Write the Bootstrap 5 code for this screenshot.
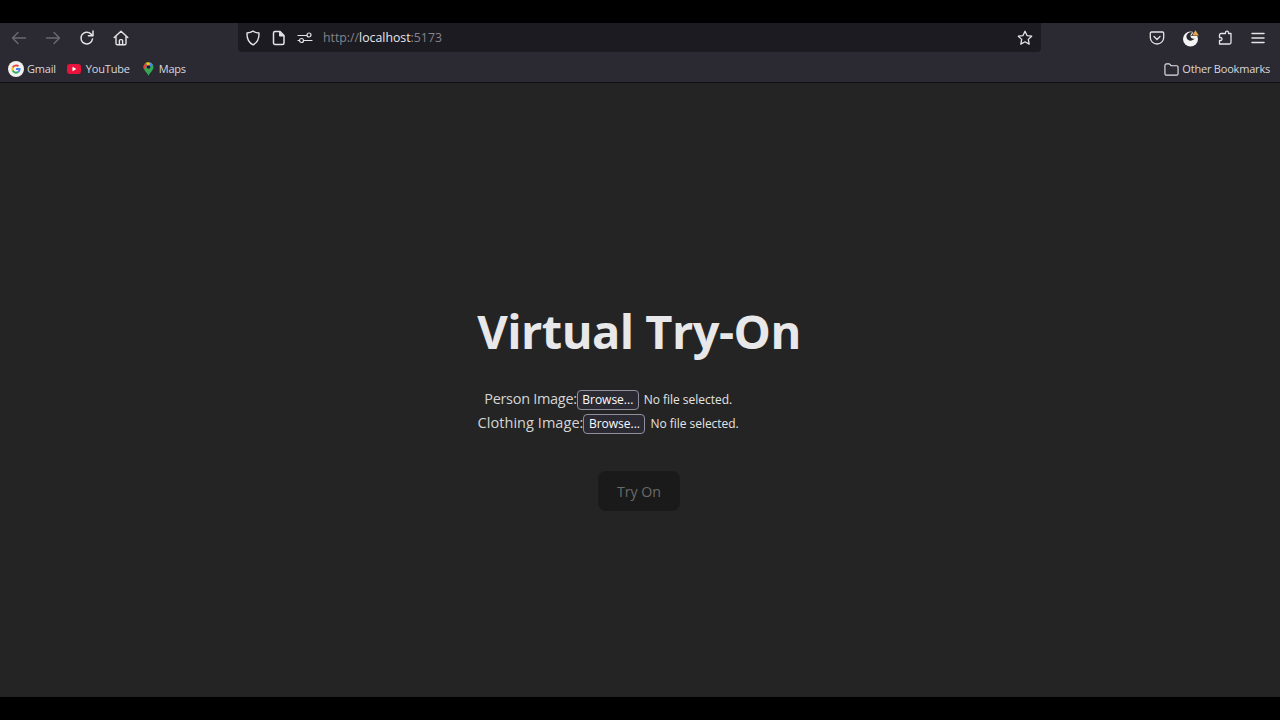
<!DOCTYPE html>
<html lang="en">
<head>
  <meta charset="UTF-8" />
  <meta name="viewport" content="width=device-width, initial-scale=1.0"/>
  <title>Virtual Try-On</title>
  <link href="https://cdn.jsdelivr.net/npm/bootstrap@5.3.0/dist/css/bootstrap.min.css" rel="stylesheet" />
  <style>
    body {
      font-family: "Open Sans", "Noto Sans", sans-serif;
      background: #000;
      height: 720px;
      overflow: hidden;
      padding: 23px 0;
    }
    .frame { height: 674px; }
    .browser-bar { background: #2b2a33; height: 60px; border-bottom: 1px solid #111114; flex: none; }
    .tool-row { height: 29px; }
    .tool-btn { width: 16px; height: 16px; color: #e4e4e7; flex: none; }
    .tool-btn.off { color: #6b6a72; }
    .nav-tools { width: 238px; padding-left: 11px; gap: 18px; }
    .url-box {
      width: 803px;
      height: 29px;
      background: #1c1b22;
      border-radius: 0 0 4px 4px;
      padding: 0 8px 0 7px;
      font-size: 12.3px;
      color: #85848b;
    }
    .url-box b { font-weight: 400; color: #e8e8ea; }
    .url-text { padding-top: 2px; }
    .url-icon { margin-right: 10px; }
    .right-tools { flex: 1; padding-right: 14px; gap: 17px; }
    .avatar-icon { width: 18px; height: 18px; }
    .bookmark-row { height: 30px; padding: 4px 10px 0 8px; font-size: 11px; letter-spacing: -.2px; color: #d8d8dc; }
    .bookmark-link { display: flex; align-items: center; gap: 3px; margin-right: 11px; }
    .yt-link { gap: 5px; margin-right: 13px; }
    .maps-link { gap: 5px; }
    .other-link { margin-right: 0; margin-left: auto; }
    .page-area { background: #242424; flex: 1; padding: 34px 2px 0 0; }
    .app-title { font-size: 47px; font-weight: 700; line-height: 54px; color: #e8e8ea; margin: 0 0 29px; letter-spacing: -.55px; }
    .file-row { height: 24px; font-size: 14.5px; color: #d4d4d4; letter-spacing: -.1px; }
    .person-label { letter-spacing: -.3px; }
    .cloth-label { letter-spacing: .05px; }
    .file-input { width: 217px; margin-top: 2px; font-size: 12px; color: #e4e4e4; letter-spacing: -.03px; text-align: left; }
    .browse-btn {
      background: #2b2a33;
      border: 1px solid #8f8f9d;
      border-radius: 4px;
      color: #fbfbfe;
      height: 20px;
      width: 62px;
      padding: 0;
      font-size: 12px;
      line-height: 18px;
      margin-right: 5px;
    }
    .try-btn {
      border: 0;
      border-radius: 8px;
      width: 82px;
      height: 40px;
      padding: 2px 0 0;
      font-size: 14.2px;
      margin-top: 36px;
    }
    .try-btn:disabled { background: #1a1a1a; color: #6a6a6a; opacity: 1; }
  </style>
</head>
<body>
  <div class="frame d-flex flex-column">
    <div class="browser-bar">
      <div class="tool-row d-flex align-items-center">
        <div class="nav-tools d-flex align-items-center">
          <svg class="tool-btn off" viewBox="0 0 16 16" fill="none" stroke="currentColor" stroke-width="1.4" stroke-linecap="round" stroke-linejoin="round"><path d="M14.5 8H1.5M7 2.500 1.500 8 7 13.500"/></svg>
          <svg class="tool-btn off" viewBox="0 0 16 16" fill="none" stroke="currentColor" stroke-width="1.4" stroke-linecap="round" stroke-linejoin="round"><path d="M1.500 8h13M9 2.500 14.500 8 9 13.500"/></svg>
          <svg class="tool-btn" viewBox="0 0 16 16" fill="none" stroke="currentColor" stroke-width="1.5" stroke-linecap="round" stroke-linejoin="round"><path d="M13.500 9a5.800 5.800 0 1 1-1.700-5.100l1.700 1.600"/><path d="M14 1v4.700H9.400"/></svg>
          <svg class="tool-btn" viewBox="0 0 16 16" fill="none" stroke="currentColor" stroke-width="1.4" stroke-linejoin="round" stroke-linecap="round"><path d="M1.200 7.600 8 1.300l6.800 6.300M3 6.200v7.200c0 .8.500 1.300 1.300 1.300h7.400c.8 0 1.300-.5 1.300-1.300V6.200"/><path d="M6.400 14.600v-4c0-.6.400-1 1-1h1.200c.6 0 1 .4 1 1v4"/></svg>
        </div>
        <div class="url-box d-flex align-items-center">
          <svg class="tool-btn url-icon" viewBox="0 0 16 16" fill="none" stroke="currentColor" stroke-width="1.4" stroke-linejoin="round"><path d="M8 1.200c2 1.300 4 1.700 6 1.800.2 5.800-1.800 9.800-6 11.800C3.800 12.800 1.800 8.800 2 3c2-.1 4-.5 6-1.800z"/></svg>
          <svg class="tool-btn url-icon" viewBox="0 0 16 16" fill="none" stroke="currentColor" stroke-width="1.500" stroke-linejoin="round"><path d="M4 1.500h5l4 4v7.500c0 .8-.7 1.500-1.500 1.500h-7.500c-.8 0-1.500-.7-1.500-1.500V3c0-.8.700-1.500 1.500-1.500z"/><path d="M8.800 1.500v4.300h4.200" fill="currentColor"/></svg>
          <svg class="tool-btn url-icon" viewBox="0 0 16 16" fill="none" stroke="currentColor" stroke-width="1.200" stroke-linecap="round"><path d="M1 5.500h8.500M1 10.500h1"/><circle cx="12" cy="5" r="2"/><circle cx="4.500" cy="10.500" r="2"/><path d="M6.500 10.500H15"/></svg>
          <span class="url-text flex-grow-1">http://<b>localhost</b>:5173</span>
          <svg class="tool-btn" viewBox="0 0 16 16" fill="none" stroke="currentColor" stroke-width="1.300" stroke-linejoin="round"><path d="M8 1.300l2 4.300 4.700.6-3.400 3.200.9 4.700L8 11.800l-4.200 2.300.9-4.700L1.300 6.200 6 5.600z"/></svg>
        </div>
        <div class="right-tools d-flex align-items-center justify-content-end">
          <svg class="tool-btn" viewBox="0 0 16 16" fill="none" stroke="currentColor" stroke-width="1.300" stroke-linecap="round" stroke-linejoin="round"><path d="M2.500 2h11c.7 0 1.200.5 1.200 1.200v4.300c0 3.700-3 6.500-6.700 6.500S1.300 11.200 1.300 7.500V3.200C1.300 2.500 1.800 2 2.500 2z"/><path d="M5 6.500l3 3 3-3"/></svg>
          <svg class="tool-btn avatar-icon" viewBox="0 0 18 18"><circle cx="8.500" cy="10" r="7.500" fill="#f4f4f5"/><path d="M4.500 8.500c1 4 6 4 8 1-2 .5-4-.5-4-2.500s1-3 2.500-3.500C7 2.800 4 5 4.500 8.500z" fill="#2b2a33"/><path d="M13.500 0 18 7h-9z" fill="#2b2a33"/><path d="M13.500 1.200 16.800 6.500h-6.600z" fill="#e5a84b"/></svg>
          <svg class="tool-btn" viewBox="0 0 16 16" fill="none" stroke="currentColor" stroke-width="1.300" stroke-linejoin="round"><path d="M6 3.500h2.500V2.700c0-2 3-2 3 0v.8h2.500v9c0 .8-.6 1.500-1.400 1.500H2.500v-3.500h1c2 0 2-3 0-3h-1V5c0-.8.700-1.500 1.500-1.500z"/></svg>
          <svg class="tool-btn" viewBox="0 0 16 16" fill="none" stroke="currentColor" stroke-width="1.500" stroke-linecap="round"><path d="M2 3.500h12M2 8h12M2 12.500h12"/></svg>
        </div>
      </div>
      <div class="bookmark-row d-flex align-items-center">
        <div class="bookmark-link">
          <svg width="16" height="16" viewBox="0 0 16 16"><circle cx="8" cy="8" r="8" fill="#f1f1f1"/><path d="M8 3.400a4.600 4.600 0 0 0-4.100 2.500l1.600 1.200A2.800 2.800 0 0 1 8 5.200c.7 0 1.300.2 1.800.7l1.400-1.400A4.600 4.600 0 0 0 8 3.400z" fill="#ea4335"/><path d="M3.900 5.900a4.600 4.600 0 0 0 0 4.200l1.600-1.200a2.800 2.800 0 0 1 0-1.800z" fill="#fbbc05"/><path d="M3.900 10.100A4.600 4.600 0 0 0 11 11.500L9.500 10.300A2.800 2.800 0 0 1 5.500 8.900z" fill="#34a853"/><path d="M12.500 8c0-.3 0-.6-.1-.9H8v1.800h2.600c-.1.600-.5 1.100-1.100 1.400l1.500 1.200c.9-.8 1.500-2 1.500-3.500z" fill="#4285f4"/></svg>
          <span>Gmail</span>
        </div>
        <div class="bookmark-link yt-link">
          <svg width="14" height="12" viewBox="0 0 14 12"><rect x="0" y="1" width="14" height="10" rx="3" fill="#e8143c"/><path d="M5.500 3.800v4.400L9.300 6z" fill="#fff"/></svg>
          <span>YouTube</span>
        </div>
        <div class="bookmark-link maps-link">
          <svg width="11" height="16" viewBox="0 0 12 16"><path d="M6 .5C2.800.5.500 2.900.500 5.800c0 3.700 4 5.800 5.500 9.700 1.500-3.900 5.500-6 5.500-9.700C11.500 2.900 9.200.5 6 .5z" fill="#34a853"/><path d="M6 .5c2 0 3.800 1 4.800 2.600L6 8 2 4z" fill="#4285f4"/><path d="M2 1.900.500 5.800c0 .9.300 1.800.700 2.500L5 4z" fill="#ea4335"/><path d="M3 1.200 6 5.500 8 2 6 .5z" fill="#fbbc05"/><circle cx="6" cy="5.800" r="1.900" fill="#1c1b22"/></svg>
          <span>Maps</span>
        </div>
        <div class="bookmark-link other-link">
          <svg width="15" height="15" viewBox="0 0 16 16" fill="none" stroke="#e4e4e7" stroke-width="1.200" stroke-linejoin="round"><path d="M1 3.500C1 2.700 1.700 2 2.500 2h3.200l2 2h5.800c.8 0 1.500.7 1.500 1.500v7c0 .8-.7 1.500-1.500 1.500h-11C1.700 14 1 13.300 1 12.500z"/></svg>
          <span>Other Bookmarks</span>
        </div>
      </div>
    </div>
    <main class="page-area d-flex flex-column align-items-center justify-content-center">
      <h1 class="app-title">Virtual Try-On</h1>
      <div class="file-row d-flex align-items-center">
        <label class="person-label">Person Image:</label>
        <span class="file-input"><button type="button" class="browse-btn">Browse...</button>No file selected.</span>
      </div>
      <div class="file-row d-flex align-items-center">
        <label class="cloth-label">Clothing Image:</label>
        <span class="file-input"><button type="button" class="browse-btn">Browse...</button>No file selected.</span>
      </div>
      <button type="button" class="btn try-btn" disabled>Try On</button>
    </main>
  </div>
  <script src="https://cdn.jsdelivr.net/npm/bootstrap@5.3.0/dist/js/bootstrap.bundle.min.js"></script>
</body>
</html>
